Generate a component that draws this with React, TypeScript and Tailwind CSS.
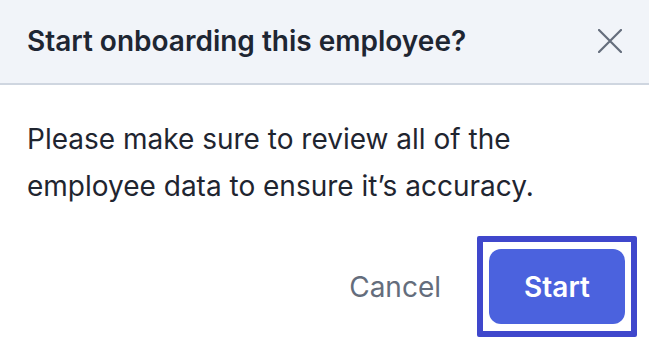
export default function App() {
  return (
    <div
      className="w-[649px] h-[354px] bg-white overflow-hidden"
      style={{ fontFamily: 'Inter, "Noto Sans", sans-serif' }}
    >
      <div className="h-[85px] flex items-center justify-between pl-[27px] pr-[27px] pb-[2px] bg-[#f1f4f9] border-b-2 border-[#cfd6e0]">
        <h2 className="text-[28px] font-semibold text-[#1e2633]">
          Start onboarding this employee?
        </h2>
        <button className="text-[#646d7c]">
          <svg width="24" height="24" viewBox="0 0 24 24" fill="none" stroke="currentColor" strokeWidth="2.2" strokeLinecap="round">
            <path d="M1 1L23 23M23 1L1 23" />
          </svg>
        </button>
      </div>

      <div className="px-[27px] pt-[31px]">
        <p className="text-[28px] leading-[47px] text-[#1f2530]">
          Please make sure to review all of the
          <br />
          employee data to ensure it’s accuracy.
        </p>
      </div>

      <div className="flex items-center justify-end gap-[36px] pr-[12px] pt-[26px]">
        <button className="text-[28px] text-[#646d7c]">Cancel</button>
        <div className="border-[6px] border-[#3f47cc] rounded-[2px] px-[6px] py-[7px]">
          <button className="w-[136px] h-[75px] rounded-[12px] bg-[#4b62de] text-white text-[28px] font-semibold">
            Start
          </button>
        </div>
      </div>
    </div>
  )
}
